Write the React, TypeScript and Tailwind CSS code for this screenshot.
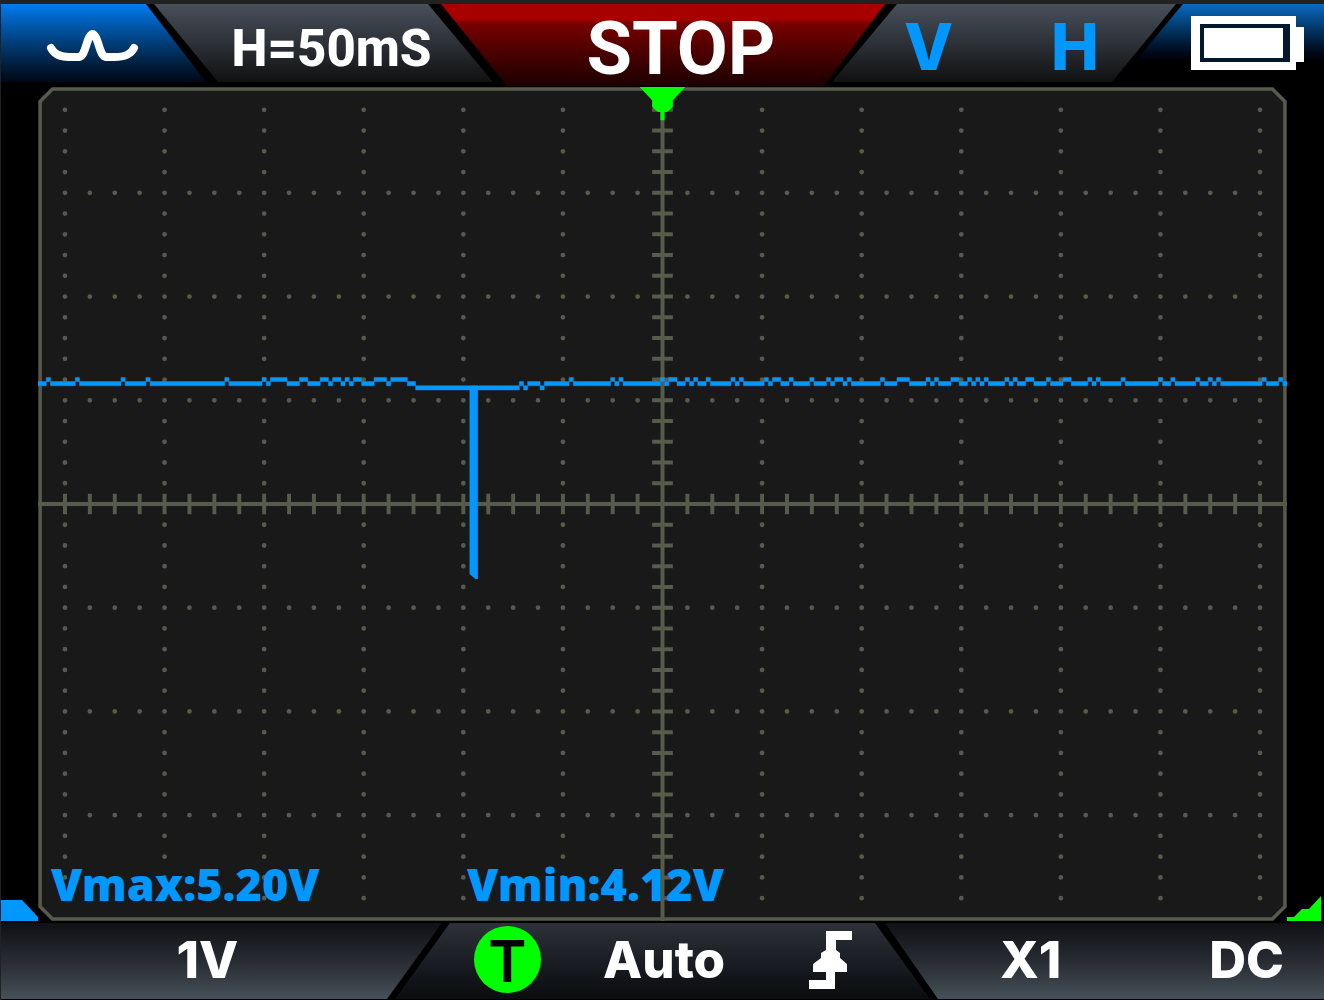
import React from "react";

const GRID_COLOR = "#575b4b";
const TRACE_COLOR = "#0098ff";

const COLS = 301;
const ROWS = 201;
const MID_X = 150;
const MID_Y = 100;

// Runs of the sampled signal: [first column, last column].
const RAISED: [number, number][] = [
  [2, 2], [9, 9], [20, 20], [26, 26], [45, 45], [54, 54], [56, 59], [63, 64],
  [68, 69], [71, 72], [74, 74], [76, 77], [81, 83], [85, 88], [128, 128],
  [138, 138], [140, 140], [150, 150], [152, 153], [156, 156], [158, 158],
  [161, 161], [167, 167], [169, 169], [175, 175], [177, 178], [181, 181],
  [186, 186], [190, 190], [192, 193], [195, 195], [203, 203], [207, 209],
  [214, 214], [216, 216], [220, 221], [224, 224], [226, 226], [228, 228],
  [233, 233], [235, 235], [238, 239], [243, 243], [247, 248], [253, 253],
  [255, 255], [261, 261], [270, 270], [273, 273], [279, 279], [282, 282],
  [284, 284], [295, 295], [299, 299],
];
const LOWERED: [number, number][] = [[91, 115], [117, 117], [121, 121]];

function tracePath() {
  const level = new Array<number>(COLS).fill(71);
  RAISED.forEach(([a, b]) => level.fill(70, a, b + 1));
  LOWERED.forEach(([a, b]) => level.fill(72, a, b + 1));
  let d = "";
  let start = 0;
  for (let x = 1; x <= COLS; x++) {
    if (x === COLS || level[x] !== level[start]) {
      d += `M${start} ${level[start]}H${x}v1H${start}z`;
      start = x;
    }
  }
  return d;
}

function dotPath() {
  let d = "";
  for (let x = 6; x <= 294; x += 6) {
    for (let y = 5; y < ROWS - 1; y += 5) {
      const onColumn = (x - 6) % 24 === 0;
      const onRow = y % 25 === 0;
      if ((onColumn || onRow) && x !== MID_X && y !== MID_Y) {
        d += `M${x + 0.5} ${y + 0.5}h0`;
      }
    }
  }
  return d;
}

function axisPath() {
  let d = `M${MID_X + 0.5} 0V${ROWS}M0 ${MID_Y + 0.5}H${COLS}`;
  for (let x = 6; x <= 294; x += 6) if (x !== MID_X) d += `M${x + 0.5} 98v5`;
  for (let y = 5; y <= 195; y += 5) if (y !== MID_Y) d += `M148 ${y + 0.5}h5`;
  return d;
}

const DOTS = dotPath();
const AXES = axisPath();
const TRACE = tracePath();

function Scope() {
  return (
    <svg
      className="absolute inset-0 size-full"
      viewBox={`0 0 ${COLS} ${ROWS}`}
      preserveAspectRatio="none"
      role="img"
      aria-label="Waveform"
    >
      <path
        d="M3.5 .5H297.5L300.5 3.5V197.5L297.5 200.5H3.5L.5 197.5V3.5z"
        fill="#191919"
        stroke={GRID_COLOR}
        strokeWidth="0.85"
      />
      <path d={DOTS} stroke={GRID_COLOR} strokeWidth="1.15" strokeLinecap="round" />
      <path d={AXES} stroke={GRID_COLOR} strokeWidth="0.95" />
      <path d={TRACE} fill={TRACE_COLOR} stroke={TRACE_COLOR} strokeWidth="0.12" strokeLinejoin="round" />
      <path d="M104 72h2v46.6h-.6L104 117.4z" fill={TRACE_COLOR} />
      <path d="M145 0H156L153 3.2V4.8L151.6 6H151V8H150V6H149.4L148 4.8V3.2z" fill="#00ff00" />
    </svg>
  );
}

function Header() {
  return (
    <header className="flex h-[83px] shrink-0 items-start font-['Roboto',sans-serif] font-bold text-white">
      <div className="flex h-[78px] shrink grow-[205] basis-[205px] items-center bg-linear-to-b from-[#007cf0] to-[#000814] pl-[44px] pt-2 [clip-path:polygon(0_0,calc(100%_-_60px)_0,100%_100%,0_100%)]">
        <svg className="h-9 w-24" viewBox="0 0 96 36" fill="none" role="img" aria-label="Signal mode">
          <path
            d="M6 19C9 25 14 28 24 28H34C39 27 40 19 43 11C46 3 49 3 52 11C55 19 56 27 61 28H69C81 28 86 25 89 19"
            stroke="#fff"
            strokeWidth="8"
            strokeLinecap="round"
            strokeLinejoin="round"
          />
        </svg>
      </div>
      <div className="-ml-[52px] flex h-[78px] shrink grow-[339] basis-[339px] items-center justify-center bg-linear-to-b from-[#48505b] via-[#2d3138] to-[#111111] pl-4 pt-[10px] text-[51px] font-extrabold leading-none [clip-path:polygon(0_0,calc(100%_-_65px)_0,100%_100%,64px_100%)]">
        H=50mS
      </div>
      <div className="-ml-[52px] flex h-[82px] shrink grow-[444] basis-[444px] items-center justify-center bg-linear-to-b from-[#a80000] from-18% via-[#780000] via-24% to-[#1c0000] pl-9 pt-2 text-[74px] leading-none [clip-path:polygon(0_0,100%_0,calc(100%_-_61px)_100%,66px_100%)]">
        STOP
      </div>
      <div className="-ml-[53px] flex h-[78px] shrink grow-[344] basis-[344px] items-center justify-between bg-linear-to-b from-[#48505b] via-[#2d3138] to-[#111111] pl-[72px] pr-[77px] pt-2 font-['Inter',sans-serif] text-[64px] font-extrabold leading-none text-[#0098ff] [clip-path:polygon(65px_0,100%_0,calc(100%_-_64px)_100%,0_100%)]">
        <span>V</span>
        <span>H</span>
      </div>
      <div className="-ml-[58px] flex h-[78px] shrink grow-[206] basis-[206px] items-center justify-end bg-linear-to-b from-[#0a6cc4] to-black to-85% pr-5 [clip-path:polygon(65px_0,100%_0,100%_100%,0_100%)]">
        <svg className="h-[54px] w-[113px]" viewBox="0 0 113 54" role="img" aria-label="Battery full">
          <path d="M0 0H105V11H113V46H105V54H0z" fill="#fff" />
          <path d="M9 8H99V46H9z" fill="#03182c" />
          <path d="M13 12H92V42H13z" fill="#fff" />
        </svg>
      </div>
    </header>
  );
}

function Footer() {
  return (
    <footer className="flex h-[79px] shrink-0 items-stretch pb-px pt-[2px] font-['Inter',sans-serif] text-[51px] font-extrabold leading-none text-white">
      <div className="flex shrink grow-[441] basis-[441px] items-center justify-center bg-linear-to-b from-[#101115] via-[#282c32] to-[#465059] pb-1 pr-7 [clip-path:polygon(0_0,100%_0,calc(100%_-_55px)_100%,0_100%)]">
        1V
      </div>
      <div className="-ml-[47px] flex shrink grow-[535] basis-[535px] items-center gap-[62px] bg-linear-to-b from-[#2d3238] via-[#1a1d24] to-[#0a0c0d] pb-1 pl-[79px] pr-[77px] [clip-path:polygon(55px_0,calc(100%_-_55px)_0,100%_100%,0_100%)]">
        <span className="flex size-[67px] items-center justify-center rounded-full bg-[#00ff00] pt-1 text-[58px] font-semibold text-black">
          T
        </span>
        <span className="flex-1">Auto</span>
        <svg className="h-[60px] w-[44px]" viewBox="0 0 44 60" role="img" aria-label="Rising edge">
          <path
            d="M17 2H43V11H27V21L31 24V29L38 35V43H26V60H0V51H17V43H4V35L12 29V24L17 21z"
            fill="#fff"
          />
        </svg>
      </div>
      <div className="-ml-[45px] flex shrink grow-[439] basis-[439px] items-center justify-between bg-linear-to-b from-[#101115] via-[#282c32] to-[#465059] pb-1 pl-[115px] pr-10 [clip-path:polygon(0_0,100%_0,100%_100%,53px_100%)]">
        <span>X1</span>
        <span>DC</span>
      </div>
    </footer>
  );
}

export default function App() {
  return (
    <div className="flex h-screen min-h-[480px] flex-col overflow-hidden border-l border-t-4 border-[#222222] bg-black">
      <Header />
      <main className="flex min-h-0 flex-1">
        <div className="flex w-[37px] shrink-0 items-end">
          <svg className="h-[21px] w-full" viewBox="0 0 37 21" role="img" aria-label="Zero level">
            <path d="M0 0H21L37 17V21H0z" fill="#0098ff" />
          </svg>
        </div>
        <section className="relative flex min-w-0 flex-1 items-end">
          <Scope />
          <div className="relative mb-[15px] grid w-full grid-cols-3 gap-x-3 pl-[13px] font-['Noto_Sans',sans-serif] text-[45px] font-black leading-none text-[#0098ff]">
            <span>Vmax:5.20V</span>
            <span>Vmin:4.12V</span>
          </div>
        </section>
        <div className="flex w-[37px] shrink-0 items-end">
          <svg className="h-[25px] w-[34px]" viewBox="0 0 34 25" role="img" aria-label="Trigger level">
            <path d="M0 21H7L15 13H22L34 0V25H0z" fill="#00ff00" />
          </svg>
        </div>
      </main>
      <Footer />
    </div>
  );
}
